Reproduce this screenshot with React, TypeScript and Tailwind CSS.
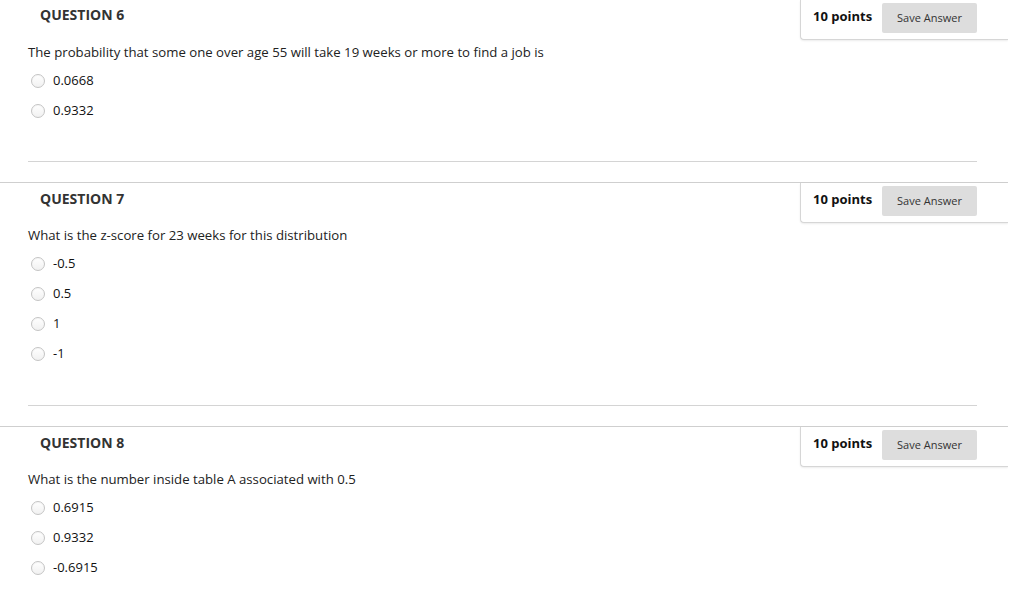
import React from "react";

type Q = { num: number; text: string; options: string[] };

const questions: Q[] = [
  {
    num: 6,
    text: "The probability that some one over age 55 will take 19 weeks or more to find a job is",
    options: ["0.0668", "0.9332"],
  },
  {
    num: 7,
    text: "What is the z-score for 23 weeks for this distribution",
    options: ["-0.5", "0.5", "1", "-1"],
  },
  {
    num: 8,
    text: "What is the number inside table A associated with 0.5",
    options: ["0.6915", "0.9332", "-0.6915"],
  },
];

function Radio() {
  return (
    <span className="block w-[14px] h-[14px] rounded-full border border-[#c4c4c4] bg-gradient-to-b from-white to-[#f1f1f1] shadow-[inset_0_1px_1px_rgba(0,0,0,0.04)]" />
  );
}

function Question({ q, first, last }: { q: Q; first: boolean; last: boolean }) {
  return (
    <div className={`border-t border-[#cfcfcf] ${first ? "-mt-px" : ""}`}>
      <div className="flex items-start justify-between">
        <h3 className={`pl-[40px] ${first ? "pt-[6px]" : "pt-[7px]"} text-[14px] leading-[18px] font-bold text-[#333]`}>
          QUESTION {q.num}
        </h3>
        <div className="w-[208px] h-[40px] border-l border-b border-[#d6d6d6] rounded-bl-[4px] bg-white shadow-[0_1px_2px_rgba(0,0,0,0.08)] flex items-start pt-[3px] pl-[12px]">
          <span className="mt-[4px] text-[13px] leading-[18px] font-bold text-[#111] w-[69px]">
            10 points
          </span>
          <button className="h-[30px] w-[95px] bg-[#dddddd] rounded-[2px] text-[11px] text-[#333] leading-[30px] text-center">
            Save Answer
          </button>
        </div>
      </div>
      <p className="mt-[3px] pl-[28px] text-[13.2px] leading-[18px] text-[#222]">{q.text}</p>
      <div className="mt-[5px] flex flex-col">
        {q.options.map((o) => (
          <label key={o} className="h-[30px] flex items-center pl-[31px] gap-[8px] text-[13px] text-[#111]">
            <Radio />
            <span>{o}</span>
          </label>
        ))}
      </div>
      {!last && (
        <div className={`${first ? "mt-[35px]" : "mt-[36px]"} mb-[20px] ml-[28px] mr-[31px] border-t border-[#d4d4d4]`} />
      )}
    </div>
  );
}

export default function App() {
  return (
    <div
      className="w-[1008px] h-[607px] overflow-hidden bg-white"
      style={{ fontFamily: '"Open Sans", "Liberation Sans", sans-serif' }}
    >
      {questions.map((q, i) => (
        <Question key={q.num} q={q} first={i === 0} last={i === questions.length - 1} />
      ))}
    </div>
  );
}
